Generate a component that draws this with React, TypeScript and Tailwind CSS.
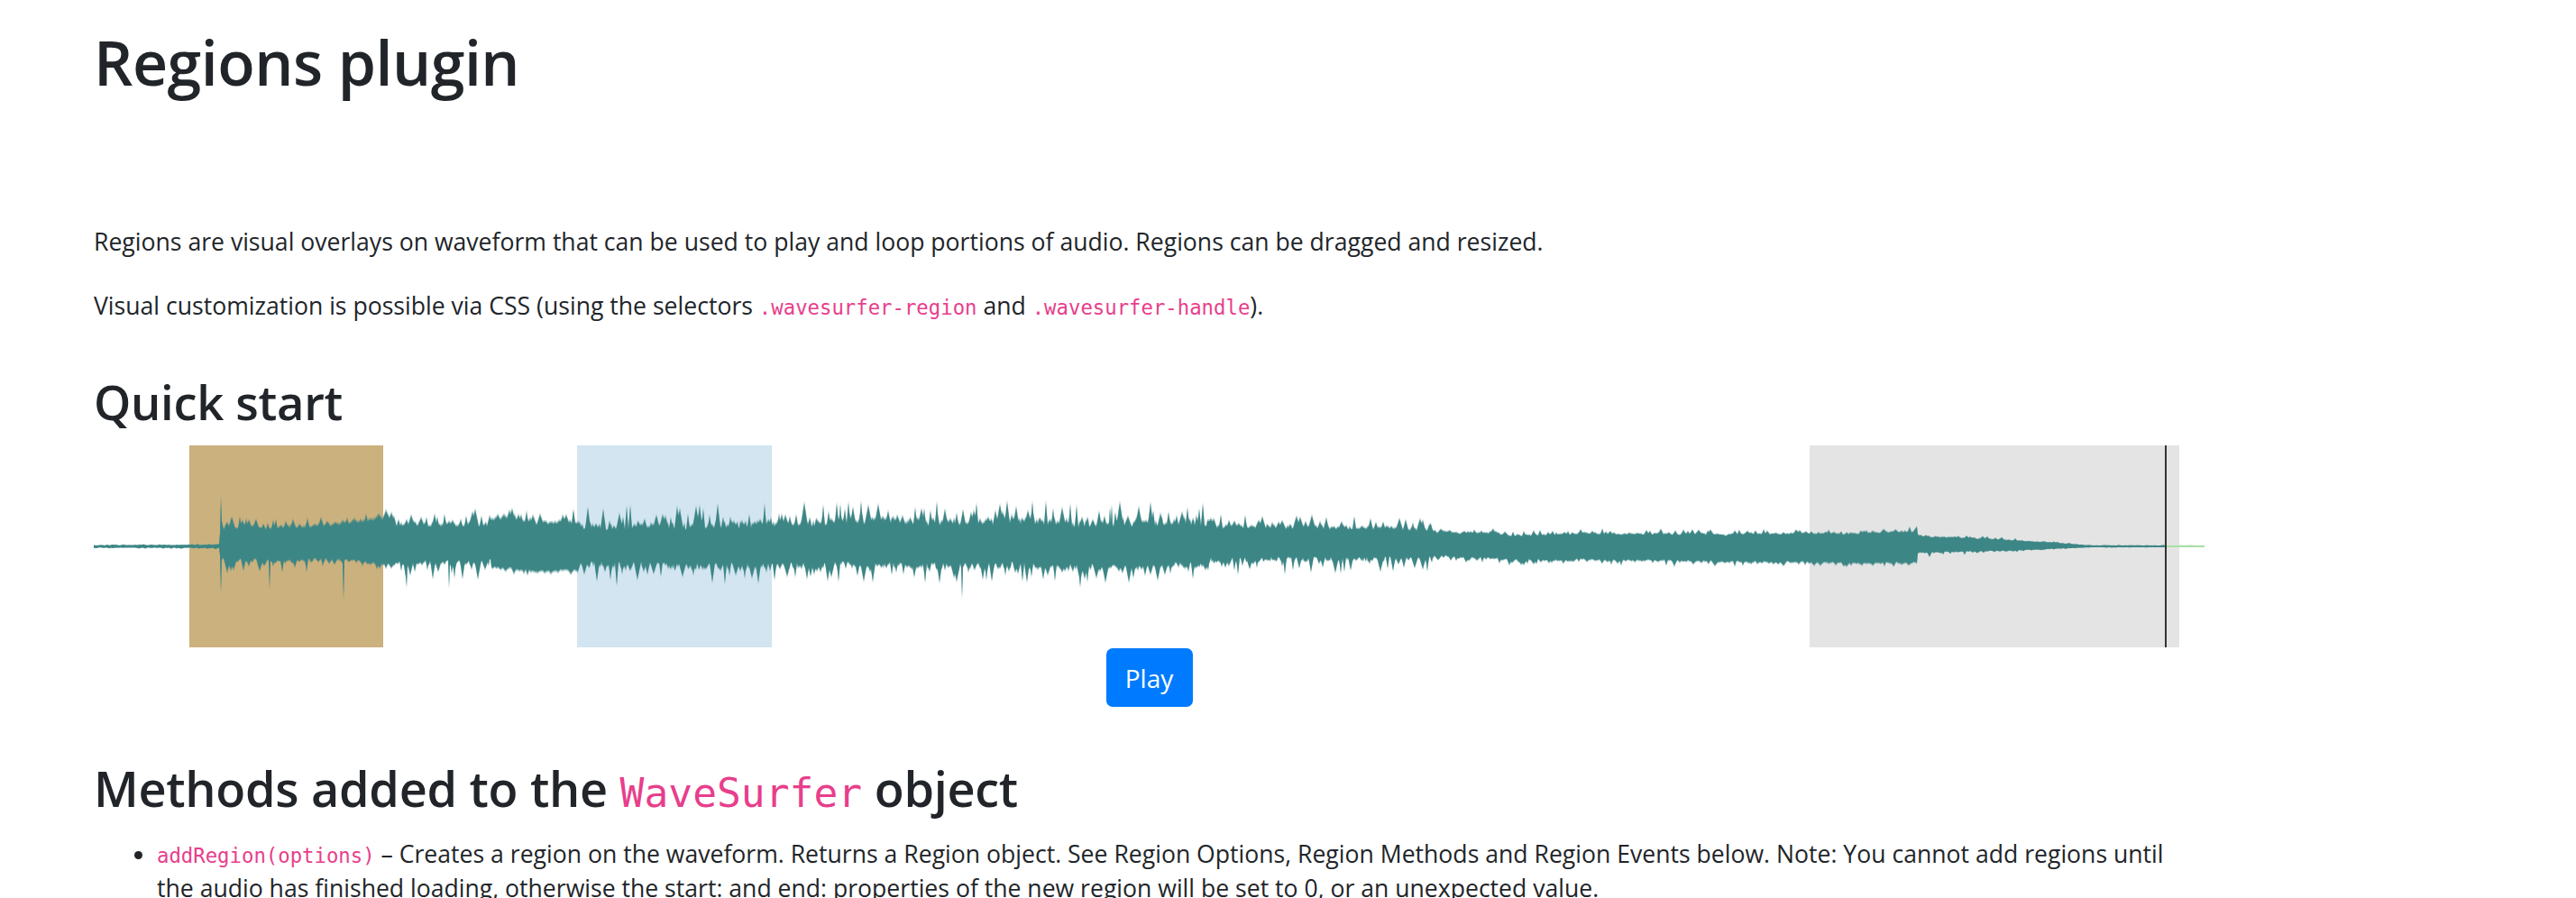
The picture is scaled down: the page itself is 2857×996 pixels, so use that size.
import React from "react";

const KP: number[][] = [
  [104, 1, 2, 1, 2], [243, 1.5, 3, 1.5, 3], [245, 19, 32, 13, 31], [376, 19, 31, 14, 28],
  [437, 26, 38, 23, 28], [440, 19, 37, 16, 38], [544, 19, 38, 16, 40], [546, 25, 37, 25, 32],
  [640, 25, 40, 25, 32], [642, 19, 46, 16, 44], [880, 21, 46, 19, 42], [1135, 21, 46, 20, 42],
  [1340, 19, 48, 20, 42], [1342, 17, 33, 14, 35], [1584, 15, 28, 12, 28], [1590, 13, 17, 11, 17],
  [1680, 14, 20, 12, 19], [2007, 15, 21, 15, 21], [2126, 17, 23, 16, 22], [2127, 11, 15, 6, 13],
  [2240, 6, 9, 4, 6], [2317, 1, 1.5, 1, 1.5], [2445, 1, 1.5, 1, 1],
];
const TOP_SPIKES: Record<number, number> = { 245: 53, 932: 46, 1233: 45, 1231: 42 };
const BOT_SPIKES: Record<number, number> = { 245: 50, 299: 46, 381: 57, 1067: 56, 451: 44, 498: 45, 1198: 44 };

function rng(seed: number) {
  return () => {
    seed = (seed + 0x6d2b79f5) | 0;
    let t = Math.imul(seed ^ (seed >>> 15), 1 | seed);
    t = (t + Math.imul(t ^ (t >>> 7), 61 | t)) ^ t;
    return ((t ^ (t >>> 14)) >>> 0) / 4294967296;
  };
}

function peaks(r: () => number) {
  const n = 2445 - 104 + 1;
  const out = new Array(n).fill(0).map(() => Math.pow(r(), 2) * 0.28);
  let x = 0;
  while (x < n) {
    const h = 0.2 + 0.8 * Math.pow(r(), 1.3);
    const w = 1 + Math.floor(r() * 3);
    for (let i = -w; i <= w; i++) {
      const p = x + i;
      if (p >= 0 && p < n) out[p] = Math.max(out[p], h * (1 - Math.abs(i) / (w + 1)));
    }
    x += 3 + Math.floor(r() * 7);
  }
  return out;
}

type Col = { x: number; t: number; b: number };

function envelope() {
  const r = rng(11);
  const pt = peaks(r), pb = peaks(r);
  const cols: Col[] = [];
  let k = 0;
  let walk = 0;
  for (let x = 104; x <= 2445; x++) {
    while (k < KP.length - 2 && x > KP[k + 1][0]) k++;
    const a = KP[k], c = KP[k + 1];
    const f = (x - a[0]) / (c[0] - a[0]);
    const v = (i: number) => a[i] + (c[i] - a[i]) * f;
    walk = Math.max(-0.22, Math.min(0.22, walk + (r() - 0.5) * 0.05));
    const t = v(1) * (1 + walk) + (v(2) - v(1)) * pt[x - 104];
    const b = v(3) * (1 - walk * 0.7) + (v(4) - v(3)) * pb[x - 104];
    cols.push({ x, t: TOP_SPIKES[x] ?? t, b: BOT_SPIKES[x] ?? b });
  }
  return cols;
}

function pathFor(cols: Col[], grow = 0) {
  const top = cols.map((c) => `${c.x - 104} ${(112 - c.t * (1 + grow)).toFixed(1)}`).join("L");
  const bot = [...cols].reverse().map((c) => `${c.x - 104} ${(112 + c.b * (1 + grow)).toFixed(1)}`).join("L");
  return `M${top}L${bot}Z`;
}

const COLS = envelope();
const PLAYED_COLS = COLS.filter((c) => c.x <= 2401);
const PLAYED = pathFor(PLAYED_COLS);
const FRINGE = pathFor(PLAYED_COLS, 0.07);
const REST = pathFor(COLS.filter((c) => c.x >= 2401));

function Code({ children, className }: { children: React.ReactNode; className: string }) {
  return <code className={`font-['DejaVu_Sans_Mono',monospace] leading-none font-normal text-[#e83e8c] ${className}`}>{children}</code>;
}

export default function App() {
  return (
    <div className="h-[996px] overflow-hidden bg-white pl-[104px] font-['Open_Sans',sans-serif] text-[#212529]">
      <div className="w-[2341px]">
        <h1 className="pt-[21px] text-[68px] leading-[96px] font-semibold tracking-[-0.5px]">Regions plugin</h1>
        <div className="mt-[132px] text-[26.6px] leading-[38px]">
          <p>Regions are visual overlays on waveform that can be used to play and loop portions of audio. Regions can be dragged and resized.</p>
          <p className="mt-[33px]">
            Visual customization is possible via CSS (using the selectors{" "}
            <Code className="text-[22.3px]">.wavesurfer-region</Code> and{" "}
            <Code className="text-[22.3px]">.wavesurfer-handle</Code>).
          </p>
        </div>
        <h2 className="mt-[54px] text-[52.5px] leading-[68px] font-semibold tracking-[-0.3px]">Quick start</h2>
        <div className="relative mt-[14px] h-[224px] w-full">
          <div className="absolute top-0 left-[106px] h-full w-[215px] bg-[#cbb17d]" />
          <div className="absolute top-0 left-[536px] h-full w-[216px] bg-[#d2e5f0]" />
          <div className="absolute top-0 left-[1903px] h-full w-[410px] bg-[#e4e4e4]" />
          <svg className="absolute inset-0" width="2341" height="224" viewBox="0 0 2341 224">
            <path d={FRINGE} fill="#3d8686" fillOpacity="0.45" />
            <path d={PLAYED} fill="#3d8686" />
            <path d={REST} fill="#a8e0a8" />
            <rect x="2297" y="0" width="2" height="224" fill="#333333" />
          </svg>
        </div>
        <div className="text-center">
          <button className="mt-[1px] h-[65px] w-[96px] rounded-[7px] bg-[#007bff] text-[28px] text-white">Play</button>
        </div>
        <h2 className="mt-[56px] text-[54px] leading-[68px] font-semibold tracking-[-0.3px]">
          Methods added to the <Code className="text-[44.6px] tracking-normal">WaveSurfer</Code> object
        </h2>
        <ul className="mt-[20px] list-disc pl-[70px] text-[26.6px] leading-[38px]">
          <li>
            <Code className="text-[22.3px]">addRegion(options)</Code> – Creates a region on the waveform. Returns a Region object. See Region Options, Region Methods and Region Events below. Note: You cannot add regions until the audio has finished loading, otherwise the start: and end: properties of the new region will be set to 0, or an unexpected value.
          </li>
        </ul>
      </div>
    </div>
  );
}
